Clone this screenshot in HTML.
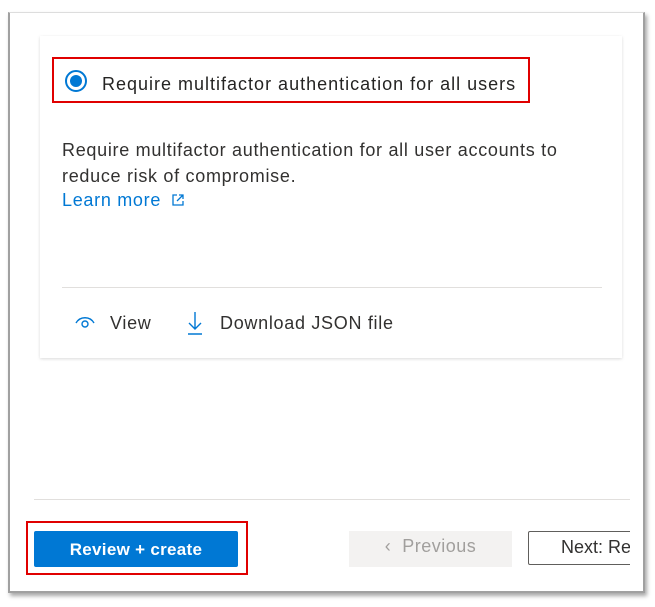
<!DOCTYPE html>
<html><head><style>
body{margin:0;width:655px;height:607px;background:#fff;position:relative;overflow:hidden;font-family:"Liberation Sans",sans-serif;}
.frame{position:absolute;left:8px;top:12px;width:633px;height:578px;border:2px solid #a0a0a0;border-top:1px solid #ddd;box-shadow:2px 3px 4px rgba(0,0,0,.35);background:#fff;overflow:hidden}
.a{position:absolute}
.card{left:30px;top:23px;width:582px;height:322px;box-shadow:0 1px 3px rgba(0,0,0,.15);background:#fff}
.t{color:#323130;font-size:18px;white-space:nowrap;letter-spacing:0.7px}
</style></head><body>
<div class="frame">
 <div class="a card"></div>
 <div class="a" style="left:42px;top:44px;width:474px;height:42px;border:2px solid #e00000"></div>
 <div class="a" style="left:55px;top:57px;width:22px;height:22px;border:2px solid #0078d4;border-radius:50%;box-sizing:border-box"></div>
 <div class="a" style="left:60px;top:62px;width:12px;height:12px;background:#0078d4;border-radius:50%"></div>
 <div class="a t" style="left:92px;top:61px;font-size:18px;letter-spacing:1px;color:#252423">Require multifactor authentication for all users</div>
 <div class="a t" style="left:52px;top:124px;line-height:26px">Require multifactor authentication for all user accounts to<br>reduce risk of compromise.</div>
 <div class="a t" style="left:52px;top:177px;color:#0078d4">Learn more
  <svg width="14" height="14" viewBox="0 0 14 14" style="margin-left:4px;vertical-align:-1px"><path d="M6 2H2v10h10V8M8 2h4v4M12 2L6 8" stroke="#0078d4" fill="none" stroke-width="1.3"/></svg></div>
 <div class="a" style="left:52px;top:274px;width:540px;height:1px;background:#e1dfdd"></div>
 <svg class="a" style="left:64px;top:302px" width="22" height="16" viewBox="0 0 22 16"><path d="M2 8C6 1 16 1 20 8" stroke="#0078d4" fill="none" stroke-width="1.4"/><circle cx="11" cy="9" r="3" stroke="#0078d4" fill="none" stroke-width="1.4"/></svg>
 <div class="a t" style="left:100px;top:300px">View</div>
 <svg class="a" style="left:176px;top:298px" width="18" height="24" viewBox="0 0 18 24"><path d="M9 1v17M3 12l6 6 6-6M2 23h14" stroke="#0078d4" fill="none" stroke-width="1.4"/></svg>
 <div class="a t" style="left:210px;top:300px">Download JSON file</div>
 <div class="a" style="left:24px;top:486px;width:596px;height:1px;background:#e1dfdd"></div>
 <div class="a" style="left:16px;top:508px;width:218px;height:50px;border:2px solid #e00000"></div>
 <div class="a" style="left:24px;top:518px;width:204px;height:36px;background:#0078d4;border-radius:2px;color:#fff;font-weight:bold;font-size:17px;text-align:center;line-height:38px;letter-spacing:0.3px">Review + create</div>
 <div class="a" style="left:339px;top:518px;width:163px;height:36px;background:#f3f2f1;color:#a19f9d;font-size:18px;line-height:30px;text-align:center;letter-spacing:0.5px">&lsaquo;&nbsp;&nbsp;Previous</div>
 <div class="a" style="left:518px;top:518px;height:34px;border:1px solid #605e5c;border-radius:2px;color:#323130;font-size:18px;line-height:30px;padding-left:32px;white-space:nowrap;box-sizing:border-box;width:130px">Next: Review</div>
 <div class="a" style="left:620px;top:500px;width:20px;height:80px;background:#fff"></div>
</div>
</body></html>
